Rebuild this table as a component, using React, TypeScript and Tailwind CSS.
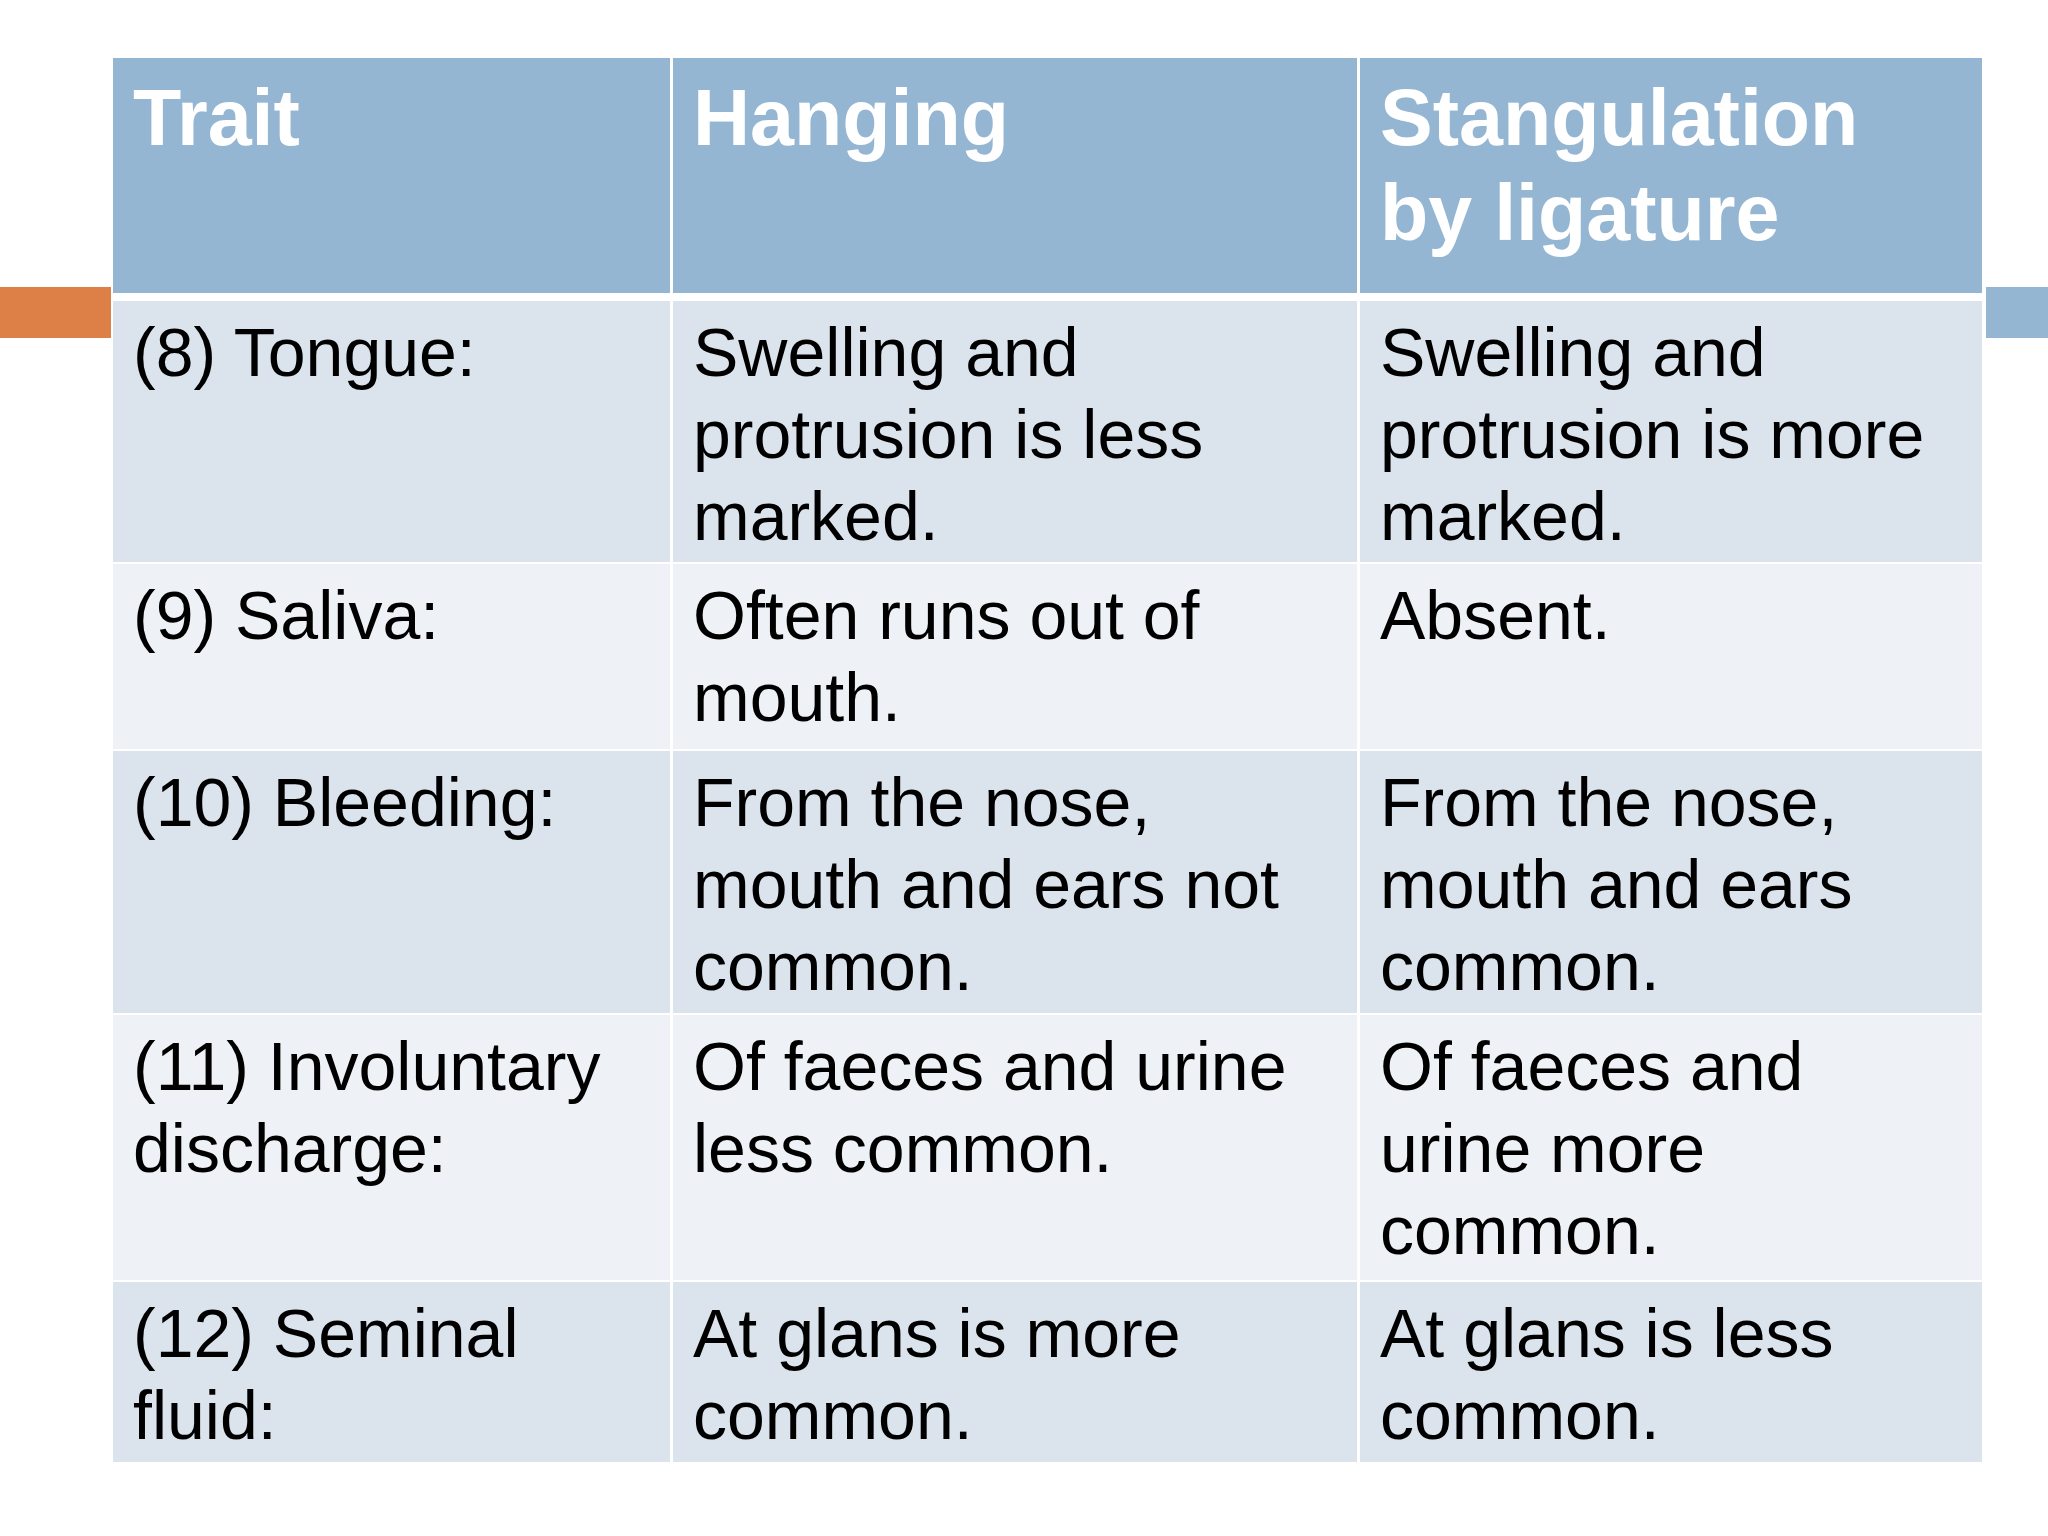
const rows = [
  {
    trait: "(8) Tongue:",
    hanging: "Swelling and protrusion is less marked.",
    ligature: "Swelling and protrusion is more marked.",
    height: "h-[261px]",
    bg: "bg-[#dbe3ec]",
  },
  {
    trait: "(9) Saliva:",
    hanging: "Often runs out of mouth.",
    ligature: "Absent.",
    height: "h-[185px]",
    bg: "bg-[#eef1f6]",
  },
  {
    trait: "(10) Bleeding:",
    hanging: "From the nose, mouth and ears not common.",
    ligature: "From the nose, mouth and ears common.",
    height: "h-[262px]",
    bg: "bg-[#dbe3ec]",
  },
  {
    trait: "(11) Involuntary discharge:",
    hanging: "Of faeces and urine less common.",
    ligature: "Of faeces and urine more common.",
    height: "h-[265px]",
    bg: "bg-[#eef1f6]",
  },
  {
    trait: "(12) Seminal fluid:",
    hanging: "At glans is more common.",
    ligature: "At glans is less common.",
    height: "h-[180px]",
    bg: "bg-[#dbe3ec]",
  },
];

const HeaderCell = ({ children }: { children: React.ReactNode }) => (
  <div className="bg-[#94b6d2] h-[235px] pl-[20px] pr-[18px] pt-[12px] text-white font-bold text-[79px] leading-[95px]">
    {children}
  </div>
);

const App = () => {
  return (
    <div
      className="w-[2048px] h-[1536px] bg-white pt-[58px] flex items-start"
      style={{ fontFamily: '"Liberation Sans", Arial, sans-serif' }}
    >
      <div className="w-[111px] h-[51px] mt-[229px] bg-[#dd8047] shrink-0"></div>

      <div className="ml-[2px] w-[1869px] shrink-0">
        <div className="grid grid-cols-[557px_684px_622px] gap-x-[3px]">
          <HeaderCell>Trait</HeaderCell>
          <HeaderCell>Hanging</HeaderCell>
          <HeaderCell>
            Stangulation
            <br />
            by ligature
          </HeaderCell>
        </div>

        <div className="mt-[8px] flex flex-col gap-[2px]">
          {rows.map((row, i) => (
            <div key={i} className="grid grid-cols-[557px_684px_622px] gap-x-[3px]">
              {[row.trait, row.hanging, row.ligature].map((text, j) => (
                <div
                  key={j}
                  className={`${row.bg} ${row.height} pl-[20px] pr-[18px] pt-[10px] text-black text-[68px] leading-[82px]`}
                >
                  {text}
                </div>
              ))}
            </div>
          ))}
        </div>
      </div>

      <div className="ml-[4px] flex-1 h-[51px] mt-[229px] bg-[#94b6d2]"></div>
    </div>
  );
};

export default App;
